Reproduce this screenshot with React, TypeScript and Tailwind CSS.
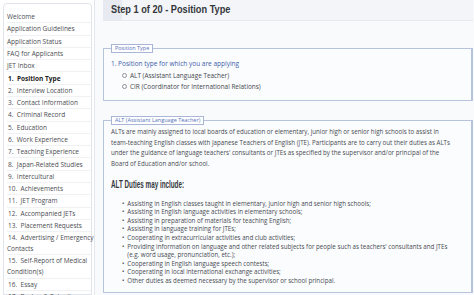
import React from 'react';

const MENU_TOP = ['Welcome', 'Application Guidelines', 'Application Status', 'FAQ for Applicants', 'JET Inbox'];

// steps with an explicit break where the original menu wraps
const STEPS: string[][] = [
  ['Position Type'],
  ['Interview Location'],
  ['Contact Information'],
  ['Criminal Record'],
  ['Education'],
  ['Work Experience'],
  ['Teaching Experience'],
  ['Japan-Related Studies'],
  ['Intercultural'],
  ['Achievements'],
  ['JET Program'],
  ['Accompanied JETs'],
  ['Placement Requests'],
  ['Advertising / Emergency', 'Contacts'],
  ['Self-Report of Medical', 'Condition(s)'],
  ['Essay'],
  ['Review & Submit'],
];

const DUTIES: React.ReactNode[] = [
  'Assisting in English classes taught in elementary, junior high and senior high schools;',
  'Assisting in English language activities in elementary schools;',
  'Assisting in preparation of materials for teaching English;',
  'Assisting in language training for JTEs;',
  'Cooperating in extracurricular activities and club activities;',
  <>
    Providing information on language and other related subjects for people such as teachers&apos; consultants and JTEs
    <br />
    (e.g. word usage, pronunciation, etc.);
  </>,
  'Cooperating in English language speech contests;',
  'Cooperating in local international exchange activities;',
  'Other duties as deemed necessary by the supervisor or school principal.',
];

const sans = { fontFamily: '"Open Sans", "Noto Sans", sans-serif' };
const narrow = { fontFamily: '"Liberation Sans", Arial, sans-serif' };

function Sidebar() {
  return (
    <aside className="ml-[3px] mt-[3px] w-[89px] shrink-0 rounded-t-[4px] border border-[#e1e4ea] bg-white pt-[7px] pl-[3px] text-[6.5px] text-[#4a4d52]">
      <ul>
        {MENU_TOP.map((m) => (
          <li key={m} className="whitespace-nowrap border-b border-[#f0f1f4] py-[0.15px] leading-[11px]">{m}</li>
        ))}
        {STEPS.map((s, i) => (
          <li
            key={s[0]}
            className={`whitespace-nowrap border-b border-[#f0f1f4] py-[0.15px] leading-[11px] ${i === 0 ? 'font-bold text-[#222]' : ''}`}
          >
            <span className="pl-[1px]">{i + 1}.</span>
            {'\u00a0 '}
            {s[0]}
            {s[1] && (
              <>
                <br />
                {s[1]}
              </>
            )}
          </li>
        ))}
      </ul>
    </aside>
  );
}

function Radio({ label }: { label: string }) {
  return (
    <label className="flex items-center gap-[3px] leading-[11px]">
      <span className="h-[5px] w-[5px] rounded-full border border-[#8a8f98] bg-white" />
      <span>{label}</span>
    </label>
  );
}

export default function App() {
  return (
    <div className="flex h-[295px] w-[474px] overflow-hidden bg-white" style={sans}>
      <Sidebar />
      <main className="ml-[2px] flex-1 border-l border-[#e3e6ec] bg-[#f9fafc] pl-[8px] pr-[1px]">
        <div className="flex h-[21px] items-center border-b border-[#e6e9ef] bg-[linear-gradient(to_right,#e7eaf0_19px,#f3f5f9_19px)] pl-[8px]">
          <h1 className="inline-block origin-left scale-x-[0.8] whitespace-nowrap text-[11.5px] font-bold text-[#34373b]" style={narrow}>
            Step 1 of 20 - Position Type
          </h1>
        </div>

        <fieldset className="mt-[23px] border border-r-2 border-[#b7c2dc] bg-[#fbfcfe] px-[7px] pb-[8px]">
          <legend className="border border-[#aab6d6] bg-white px-[3px] text-[5.5px] leading-[7px] text-[#5473b9]">Position Type</legend>
          <p className="mt-[6px] text-[6.5px] leading-[10px] text-[#3d5ea8]">1. Position type for which you are applying</p>
          <div className="mt-[0.5px] pl-[11px] text-[6.4px] text-[#45484d]">
            <Radio label="ALT (Assistant Language Teacher)" />
            <Radio label="CIR (Coordinator for International Relations)" />
          </div>
        </fieldset>

        <fieldset className="mt-[15px] border border-r-2 border-[#b7c2dc] bg-[#fbfcfe] px-[7px] pb-[6px] text-[6.2px] text-[#474b51]">
          <legend className="border border-[#aab6d6] bg-white px-[3px] text-[5.5px] leading-[7px] text-[#5473b9]">ALT (Assistant Language Teacher)</legend>
          <p className="mt-[2.5px] whitespace-nowrap leading-[10.5px]">
            ALTs are mainly assigned to local boards of education or elementary, junior high or senior high schools to assist in
            <br />
            team-teaching English classes with Japanese Teachers of English (JTE). Participants are to carry out their duties as ALTs
            <br />
            under the guidance of language teachers&apos; consultants or JTEs as specified by the supervisor and/or principal of the
            <br />
            Board of Education and/or school.
          </p>
          <h2 className="mt-[10px] inline-block origin-left scale-x-[0.63] whitespace-nowrap text-[10px] font-bold leading-[12px] text-[#34373b]" style={narrow}>
            ALT Duties may include:
          </h2>
          <ul className="mt-[8.7px] pl-[11px] leading-[8.6px]">
            {DUTIES.map((d, i) => (
              <li key={i} className="flex gap-[3px] whitespace-nowrap">
                <span>•</span>
                <span>{d}</span>
              </li>
            ))}
          </ul>
        </fieldset>
      </main>
    </div>
  );
}
